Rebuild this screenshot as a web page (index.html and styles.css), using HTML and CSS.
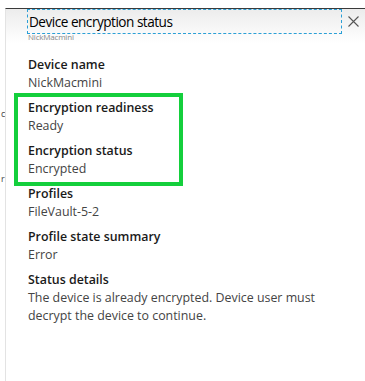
FILE: index.html
```html
<!DOCTYPE html>
<html>
<head>
<meta charset="utf-8">
<link rel="stylesheet" href="styles.css">
</head>
<body>
<div class="page">
  <div class="backdrop">
    <span class="frag f1">c</span>
    <span class="frag f2">r</span>
  </div>
  <div class="panel">
    <div class="header">
      <div class="title-box">
        <div class="title">Device encryption status</div>
      </div>
      <div class="close">
        <svg width="11" height="11" viewBox="0 0 11 11"><path d="M0.5 0.5 L10.5 10.5 M10.5 0.5 L0.5 10.5" stroke="#555" stroke-width="1.1" fill="none"/></svg>
      </div>
      <div class="subtitle">NickMacmini</div>
    </div>
    <div class="content">
      <div class="section">
        <div class="label">Device name</div>
        <div class="value">NickMacmini</div>
      </div>
      <div class="section">
        <div class="label">Encryption readiness</div>
        <div class="value">Ready</div>
      </div>
      <div class="section">
        <div class="label">Encryption status</div>
        <div class="value">Encrypted</div>
      </div>
      <div class="section">
        <div class="label">Profiles</div>
        <div class="value">FileVault-5-2</div>
      </div>
      <div class="section">
        <div class="label">Profile state summary</div>
        <div class="value">Error</div>
      </div>
      <div class="section">
        <div class="label">Status details</div>
        <div class="value">The device is already encrypted. Device user must decrypt the device to continue.</div>
      </div>
      <div class="highlight"></div>
    </div>
  </div>
</div>
</body>
</html>
```
FILE: styles.css
```css
html, body {
  margin: 0;
  padding: 0;
  background: #fff;
}
.page {
  position: relative;
  width: 365px;
  height: 381px;
  overflow: hidden;
  display: flex;
  font-family: "Open Sans", "Noto Sans", sans-serif;
}
.backdrop {
  width: 5px;
  position: relative;
  flex: none;
}
.frag {
  position: absolute;
  left: 1px;
  font-size: 9px;
  color: #444;
}
.f1 { top: 107px; }
.f2 { top: 172px; }
.panel {
  flex: 1;
  margin-top: 8px;
  border-top: 1px solid #3a3a3a;
  border-left: 1px solid #e3e3e3;
  position: relative;
}
.header {
  position: relative;
  height: 34px;
  background: linear-gradient(#ececec, #ffffff);
}
.title-box {
  position: absolute;
  left: 21px;
  top: 0;
  width: 313px;
  height: 23px;
  border: 1px dashed #2a9fd6;
}
.title {
  font-size: 13.6px;
  line-height: 22px;
  color: #000;
  padding: 1px 0 0 1px;
  letter-spacing: -0.5px;
}
.close {
  position: absolute;
  left: 342px;
  top: 7px;
  width: 11px;
  height: 11px;
}
.close svg { display: block; }
.subtitle {
  position: absolute;
  left: 22px;
  top: 23px;
  font-size: 8px;
  line-height: 9px;
  color: #888;
  letter-spacing: -0.2px;
}
.content {
  position: relative;
  padding: 13px 0 0 22px;
  display: flex;
  flex-direction: column;
  gap: 7px;
}
.section {
  font-size: 12.4px;
  line-height: 18px;
}
.label {
  font-weight: 600;
  color: #1a1a1a;
}
.value {
  color: #444;
  width: 310px;
}
.highlight {
  position: absolute;
  left: 8px;
  top: 50px;
  width: 161px;
  height: 85px;
  border: 4px solid #14cf3c;
}
```
